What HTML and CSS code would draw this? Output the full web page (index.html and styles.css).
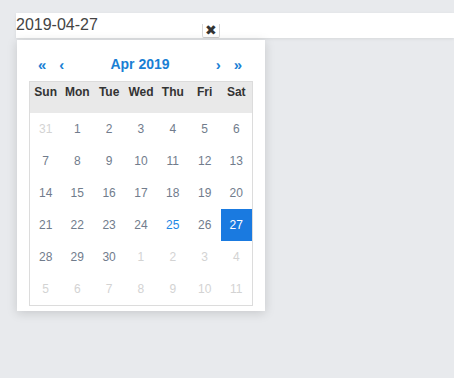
FILE: index.html
```html
<!DOCTYPE html>
<html lang="en">
<head>
    <meta charset="UTF-8">
    <title>Datepicker</title>
    <link rel="stylesheet" href="styles.css">
</head>
<body>
    <div class="field">
        <input class="date-input" type="text" value="2019-04-27">
        <span class="clear">&#10006;</span>
    </div>

    <div class="picker">
        <div class="nav">
            <div class="nav-left">
                <span class="btn">&laquo;</span>
                <span class="btn">&lsaquo;</span>
            </div>
            <div class="title">Apr 2019</div>
            <div class="nav-right">
                <span class="btn">&rsaquo;</span>
                <span class="btn">&raquo;</span>
            </div>
        </div>
        <table class="days">
            <thead>
                <tr><th>Sun</th><th>Mon</th><th>Tue</th><th>Wed</th><th>Thu</th><th>Fri</th><th>Sat</th></tr>
            </thead>
            <tbody>
                <tr><td class="muted">31</td><td>1</td><td>2</td><td>3</td><td>4</td><td>5</td><td>6</td></tr>
                <tr><td>7</td><td>8</td><td>9</td><td>10</td><td>11</td><td>12</td><td>13</td></tr>
                <tr><td>14</td><td>15</td><td>16</td><td>17</td><td>18</td><td>19</td><td>20</td></tr>
                <tr><td>21</td><td>22</td><td>23</td><td>24</td><td class="today">25</td><td>26</td><td class="selected">27</td></tr>
                <tr><td>28</td><td>29</td><td>30</td><td class="muted">1</td><td class="muted">2</td><td class="muted">3</td><td class="muted">4</td></tr>
                <tr><td class="muted">5</td><td class="muted">6</td><td class="muted">7</td><td class="muted">8</td><td class="muted">9</td><td class="muted">10</td><td class="muted">11</td></tr>
            </tbody>
        </table>
    </div>
</body>
</html>
```

FILE: styles.css
```css
body {
    margin: 0;
    padding: 13px 0 0 16px;
    background-color: #e8eaed;
    font-family: "Liberation Sans", Arial, sans-serif;
    height: 100vh;
    box-sizing: border-box;
}

.field {
    display: flex;
    height: 25px;
    background: #fff;
    box-shadow: 0 1px 3px rgba(0, 0, 0, 0.08);
}

.date-input {
    border: none;
    outline: none;
    margin: 0;
    padding: 0 0 2px;
    width: 186px;
    height: 25px;
    box-sizing: border-box;
    font-family: inherit;
    font-size: 16px;
    color: #444;
    background: transparent;
}

.clear {
    align-self: flex-end;
    width: 18px;
    height: 14px;
    box-sizing: border-box;
    border-bottom: 1px solid #c8c8c8;
    border-left: 1px solid #d8d8d8;
    border-right: 1px solid #d8d8d8;
    border-radius: 0 0 2px 2px;
    font-size: 14px;
    line-height: 12px;
    color: #333;
    text-align: center;
}

.picker {
    margin-top: 2px;
    margin-left: 1px;
    width: 224px;
    padding: 12px 12px 5px;
    background: #fff;
    box-shadow: 0 2px 10px rgba(0, 0, 0, 0.15);
}

.nav {
    display: flex;
    align-items: center;
    height: 24px;
    margin-bottom: 5px;
    color: #1a7fd4;
    font-weight: bold;
    font-size: 14px;
}

.nav-left,
.nav-right {
    display: flex;
    gap: 13px;
    width: 60px;
}

.nav-left {
    padding-left: 9px;
}

.nav-right {
    justify-content: flex-end;
    padding-right: 11px;
}

.btn {
    font-size: 15px;
    cursor: pointer;
}

.title {
    flex: 1;
    text-align: center;
    font-size: 14px;
}

.days {
    border-collapse: collapse;
    border: 1px solid #dcdcdc;
    width: 224px;
    table-layout: fixed;
}

.days th {
    background: #e9e9e9;
    color: #333;
    font-size: 12px;
    font-weight: bold;
    height: 28px;
    vertical-align: top;
    padding: 3px 0 0;
    text-align: center;
}

.days td {
    height: 32px;
    padding: 0;
    text-align: center;
    font-size: 12px;
    color: #717c8c;
}

.days td.muted {
    color: #d3d3d3;
}

.days td.today {
    color: #1e88e5;
}

.days td.selected {
    background: #1a7ae0;
    color: #fff;
}
```
